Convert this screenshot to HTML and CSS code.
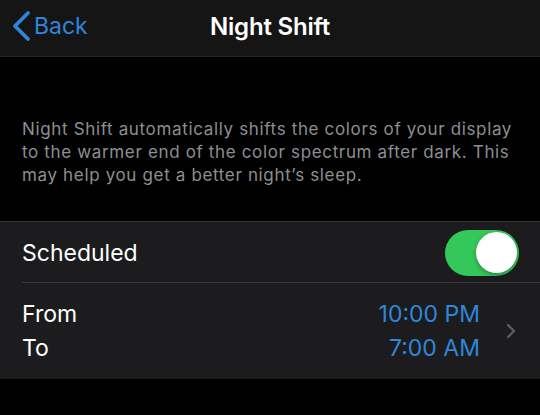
FILE: index.html
```html
<!DOCTYPE html>
<html lang="en">
<head>
  <meta charset="UTF-8">
  <title>Night Shift</title>
  <link rel="stylesheet" href="styles.css">
</head>
<body>
  <header class="nav">
    <a class="back" href="#">
      <svg class="back-icon" width="22" height="32" viewBox="0 0 22 32">
        <path d="M18 3 L5 16 L18 29" fill="none" stroke="#2f86db" stroke-width="3.8" stroke-linecap="round" stroke-linejoin="round"/>
      </svg>
      <span>Back</span>
    </a>
    <h1 class="title">Night Shift</h1>
    <div></div>
  </header>

  <p class="desc">Night Shift automatically shifts the colors of your display to the warmer end of the color spectrum after dark. This may help you get a better night’s sleep.</p>

  <div class="group">
    <div class="row row-switch">
      <span class="label">Scheduled</span>
      <div class="switch on"><span class="knob"></span></div>
    </div>
    <div class="row row-times">
      <div class="labels">
        <span>From</span>
        <span>To</span>
      </div>
      <div class="times">
        <span>10:00 PM</span>
        <span>7:00 AM</span>
      </div>
      <svg class="chevron" width="12" height="16" viewBox="0 0 12 16">
        <path d="M3 2 L9 8 L3 14" fill="none" stroke="#5b5b60" stroke-width="2.4" stroke-linecap="round" stroke-linejoin="round"/>
      </svg>
    </div>
  </div>
</body>
</html>
```

FILE: styles.css
```css
body {
  margin: 0;
  background-color: #000;
  color: #fff;
  font-family: Inter, "Noto Sans", sans-serif;
  width: 540px;
  height: 415px;
  overflow: hidden;
}

.nav {
  display: grid;
  grid-template-columns: 1fr auto 1fr;
  align-items: center;
  height: 55px;
  background-color: #151515;
  border-bottom: 1px solid #222;
  padding-bottom: 1px;
}

.back {
  display: flex;
  align-items: center;
  gap: 2px;
  padding-left: 10px;
  padding-bottom: 3px;
  color: #2f86db;
  text-decoration: none;
  font-size: 23px;
}

.back-icon {
  display: block;
}

.title {
  margin: 0;
  padding-bottom: 3px;
  font-size: 24px;
  font-weight: 600;
  letter-spacing: -0.2px;
}

.desc {
  margin: 0;
  padding: 61px 18px 34px 22px;
  font-size: 17px;
  line-height: 23px;
  color: #8e8e93;
  letter-spacing: 0.65px;
}

.group {
  background-color: #1c1c1e;
  border-top: 1px solid #333;
}

.row {
  display: flex;
  align-items: center;
  padding: 0 21px 0 22px;
  font-size: 23px;
}

.row-switch {
  height: 61px;
  justify-content: space-between;
  position: relative;
}

.row-switch::after {
  content: "";
  position: absolute;
  left: 22px;
  right: 0;
  bottom: 0;
  height: 1px;
  background-color: #38383a;
}

.switch {
  width: 74px;
  height: 46px;
  border-radius: 23px;
  background-color: #39393d;
  display: flex;
  align-items: center;
  padding: 0 2px;
  box-sizing: border-box;
}

.switch.on {
  background-color: #34c759;
  justify-content: flex-end;
}

.knob {
  width: 41px;
  height: 41px;
  border-radius: 50%;
  background-color: #fff;
  box-shadow: 0 2px 4px rgba(0, 0, 0, 0.3);
}

.row-times {
  height: 96px;
}

.labels, .times {
  display: flex;
  flex-direction: column;
  line-height: 34px;
}

.labels {
  flex: 1;
}

.times {
  align-items: flex-end;
  color: #2f86db;
}

.chevron {
  display: block;
  margin-left: 25px;
  margin-right: 2px;
}
```
